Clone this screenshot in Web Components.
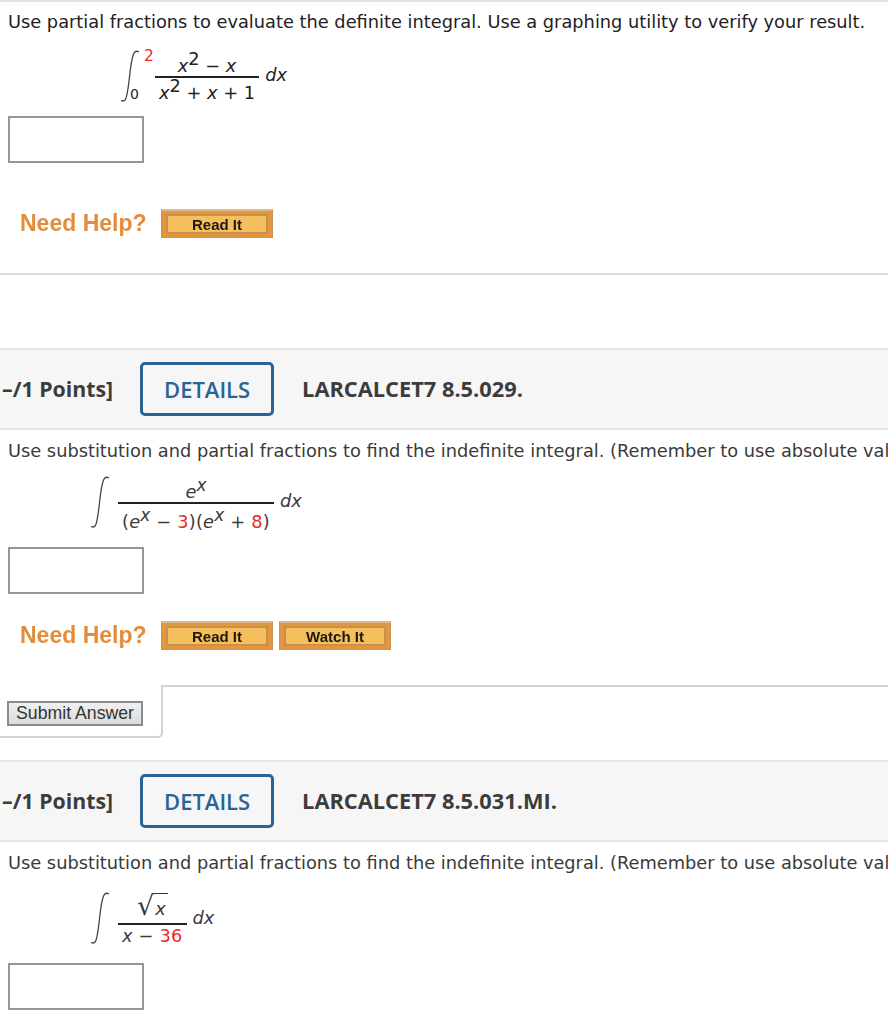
<!DOCTYPE html>
<html>
<head>
<meta charset="utf-8">
<style>
  html, body { margin: 0; padding: 0; background: #fff; }
  body { width: 888px; height: 1024px; overflow: hidden; font-family: "DejaVu Sans", sans-serif; }
  i { font-style: italic; }
  sup { font-size: 1em; line-height: 0; vertical-align: 7px; }
  b { font-weight: normal; color: #ee2a1f; }
  sup i { font-size: 0.95em; }
</style>
</head>
<body>
<q-body style="border-top: 2px solid #e3e3e3; padding-top: 10px;">
  <q-prompt style="color: #222;">Use partial fractions to evaluate the definite integral. Use a graphing utility to verify your result.</q-prompt>
  <math-row indent="120" style="margin-top: 18px; height: 52px; color: #222;">
    <math-int upper="2" lower="0"></math-int>
    <math-frac num-pad="0" den-pad="5" style="margin: 6px 0 0 -1px;">
      <span slot="num"><i>x</i><sup>2</sup> − <i>x</i></span>
      <span slot="den"><i>x</i><sup>2</sup> + <i>x</i> + 1</span>
    </math-frac>
  </math-row>
  <answer-box style="margin-top: 14px;"></answer-box>
  <help-row style="margin-top: 46px;">
    <help-button>Read It</help-button>
  </help-row>
</q-body>
<q-rule style="margin-top: 35px;"></q-rule>

<q-header points="–/1 Points]" code="LARCALCET7 8.5.029." style="margin-top: 73px;"></q-header>
<q-body style="padding-top: 11px;">
  <q-prompt>Use substitution and partial fractions to find the indefinite integral. (Remember to use absolute val</q-prompt>
  <math-row indent="90" style="margin-top: 15px; height: 52px;">
    <math-int></math-int>
    <math-frac num-pad="0" den-pad="8" style="margin: 6px 0 0 8px;">
      <span slot="num"><i>e</i><sup><i>x</i></sup></span>
      <span slot="den" style="letter-spacing: 0.2px;">(<i>e</i><sup><i>x</i></sup> − <b>3</b>)(<i>e</i><sup><i>x</i></sup> + <b>8</b>)</span>
    </math-frac>
  </math-row>
  <answer-box style="margin-top: 19px;"></answer-box>
  <help-row style="margin-top: 27px;">
    <help-button>Read It</help-button>
    <help-button>Watch It</help-button>
  </help-row>
</q-body>
<submit-bar style="margin-top: 35px;"></submit-bar>

<q-header points="–/1 Points]" code="LARCALCET7 8.5.031.MI." style="margin-top: 22px;"></q-header>
<q-body style="padding-top: 11px;">
  <q-prompt>Use substitution and partial fractions to find the indefinite integral. (Remember to use absolute val</q-prompt>
  <math-row indent="90" style="margin-top: 19px; height: 52px;">
    <math-int></math-int>
    <math-frac num-pad="4" den-pad="1" style="margin: 7px 0 0 8px;">
      <span slot="num"><math-sqrt><i>x</i></math-sqrt></span>
      <span slot="den" style="letter-spacing: 0.2px;"><i>x</i> − <b>36</b></span>
    </math-frac>
  </math-row>
  <answer-box style="margin-top: 19px;"></answer-box>
</q-body>

<script>
class QBody extends HTMLElement {
  constructor() {
    super();
    this.attachShadow({ mode: 'open' }).innerHTML = `
      <style>:host { display: block; }</style>
      <slot></slot>`;
  }
}

class QPrompt extends HTMLElement {
  constructor() {
    super();
    this.attachShadow({ mode: 'open' }).innerHTML = `
      <style>
        :host {
          display: block;
          padding-left: 8px;
          font: 17.8px/20px "DejaVu Sans", sans-serif;
          color: #3a3a3a;
          white-space: nowrap;
        }
      </style>
      <slot></slot>`;
  }
}

class MathRow extends HTMLElement {
  constructor() {
    super();
    const indent = this.getAttribute('indent') || 0;
    this.attachShadow({ mode: 'open' }).innerHTML = `
      <style>
        :host {
          display: flex;
          align-items: flex-start;
          padding-left: ${indent}px;
          font: 17.8px/20px "DejaVu Sans", sans-serif;
          color: #3a3a3a;
        }
      </style>
      <slot></slot>`;
  }
}

class MathInt extends HTMLElement {
  constructor() {
    super();
    const upper = this.getAttribute('upper') || '';
    const lower = this.getAttribute('lower') || '';
    this.attachShadow({ mode: 'open' }).innerHTML = `
      <style>
        :host { display: flex; align-items: stretch; height: 52px; }
        svg { display: block; width: 20px; height: 52px; flex: none; }
        .limits {
          display: flex;
          flex-direction: column;
          justify-content: space-between;
          line-height: 14px;
          width: 16px;
        }
        .up { color: #ee2a1f; margin: -1px 0 0 4px; font-size: 15.5px; }
        .lo { margin: 0 0 1px -10px; font-size: 14px; }
      </style>
      <svg viewBox="0 0 20 52">
        <path d="M1 50.5c2 1 3.6.4 4.600-1.400C7.400 45.500 8.600 35 9.600 26 10.800 15 12 5 14.600 2.300c1.300-1.300 3-1.200 4.200-.2" fill="none" stroke="#444" stroke-width="1.3"/>
      </svg>
      ${upper ? `<div class="limits"><span class="up">${upper}</span><span class="lo">${lower}</span></div>` : ''}`;
  }
}

class MathFrac extends HTMLElement {
  constructor() {
    super();
    const numPad = this.getAttribute('num-pad') || 0;
    const denPad = this.getAttribute('den-pad') || 0;
    this.attachShadow({ mode: 'open' }).innerHTML = `
      <style>
        :host { display: inline-flex; align-items: flex-start; }
        .frac { display: flex; flex-direction: column; align-items: stretch; text-align: center; white-space: nowrap; }
        .num { padding: 0 5px ${numPad}px; border-bottom: 2px solid #222; }
        .den { padding: ${denPad}px 4px 0; }
        .dx { margin: 9px 0 0 6px; font-style: italic; }
      </style>
      <div class="frac">
        <div class="num"><slot name="num"></slot></div>
        <div class="den"><slot name="den"></slot></div>
      </div>
      <span class="dx">dx</span>`;
  }
}

class MathSqrt extends HTMLElement {
  constructor() {
    super();
    this.attachShadow({ mode: 'open' }).innerHTML = `
      <style>
        :host { display: inline-block; white-space: nowrap; }
        .rad { font-size: 27px; line-height: 0; }
        .in { border-top: 1.5px solid #333; padding: 4px 2px 0 1px; }
      </style>
      <span class="rad">√</span><span class="in"><slot></slot></span>`;
  }
}

class AnswerBox extends HTMLElement {
  constructor() {
    super();
    this.attachShadow({ mode: 'open' }).innerHTML = `
      <style>
        :host {
          display: block;
          box-sizing: border-box;
          width: 136px;
          height: 47px;
          margin-left: 8px;
          background: #fff;
          border: 2px solid #969696;
        }
      </style>`;
  }
}

class HelpRow extends HTMLElement {
  constructor() {
    super();
    this.attachShadow({ mode: 'open' }).innerHTML = `
      <style>
        :host { display: flex; align-items: center; gap: 6px; padding-left: 20px; }
        .need {
          width: 135px;
          font: bold 23px/29px "Liberation Sans", sans-serif;
          color: #e38d3c;
          white-space: nowrap;
          filter: blur(0.3px);
        }
      </style>
      <span class="need">Need Help?</span>
      <slot></slot>`;
  }
}

class HelpButton extends HTMLElement {
  constructor() {
    super();
    this.attachShadow({ mode: 'open' }).innerHTML = `
      <style>
        :host {
          display: block;
          box-sizing: border-box;
          width: 112px;
          height: 29px;
          padding: 3px 4px 3px;
          background: #e4963f;
          border: 1px solid #c79457;
          border-top: 2px solid #e2b98a;
          filter: blur(0.4px);
        }
        .in {
          box-sizing: border-box;
          height: 100%;
          display: flex;
          align-items: center;
          justify-content: center;
          background: #f4bf5c;
          border: 2px solid #c6924d;
          font: bold 15px/1 "Liberation Sans", sans-serif;
          color: #1e1a10;
        }
      </style>
      <div class="in"><slot></slot></div>`;
  }
}

class QRule extends HTMLElement {
  constructor() {
    super();
    this.attachShadow({ mode: 'open' }).innerHTML = `
      <style>:host { display: block; height: 2px; background: #dcdcdc; }</style>`;
  }
}

class QHeader extends HTMLElement {
  constructor() {
    super();
    const points = this.getAttribute('points');
    const code = this.getAttribute('code');
    this.attachShadow({ mode: 'open' }).innerHTML = `
      <style>
        :host {
          display: flex;
          align-items: center;
          box-sizing: border-box;
          height: 82px;
          padding-left: 2px;
          background: #f6f6f6;
          border-top: 2px solid #e6e6e6;
          border-bottom: 2px solid #e6e6e6;
          font: bold 21.3px/1 "Open Sans", sans-serif;
          color: #3c3c3c;
          white-space: nowrap;
        }
        .details {
          box-sizing: border-box;
          width: 134px;
          height: 54px;
          margin: 0 28px 0 27px;
          padding-bottom: 1px;
          display: flex;
          align-items: center;
          justify-content: center;
          border: 3px solid #2a6496;
          border-radius: 5px;
          font-size: 22px;
          font-weight: 600;
          color: #2a6496;
        }
        .code { font-size: 21.8px; }
      </style>
      <span class="pts">${points}</span>
      <div class="details">DETAILS</div>
      <span class="code">${code}</span>`;
  }
}

class SubmitBar extends HTMLElement {
  constructor() {
    super();
    this.attachShadow({ mode: 'open' }).innerHTML = `
      <style>
        :host { display: flex; align-items: flex-start; }
        .left {
          box-sizing: border-box;
          width: 163px;
          height: 53px;
          padding: 16px 0 0 7px;
          border-right: 2px solid #d2d2d2;
          border-bottom: 2px solid #d2d2d2;
          border-bottom-right-radius: 5px;
        }
        .right { flex: 1; height: 0; border-top: 2px solid #d2d2d2; margin-left: -2px; }
        .btn {
          box-sizing: border-box;
          width: 136px;
          height: 25px;
          display: flex;
          align-items: center;
          justify-content: center;
          background: linear-gradient(#f0f0f0, #dcdcdc);
          border: 2px solid #8c8c8c;
          font: 17.7px/1 "Liberation Sans", sans-serif;
          color: #333;
        }
      </style>
      <div class="left"><div class="btn">Submit Answer</div></div>
      <div class="right"></div>`;
  }
}

customElements.define('q-body', QBody);
customElements.define('q-prompt', QPrompt);
customElements.define('math-row', MathRow);
customElements.define('math-int', MathInt);
customElements.define('math-frac', MathFrac);
customElements.define('math-sqrt', MathSqrt);
customElements.define('answer-box', AnswerBox);
customElements.define('help-row', HelpRow);
customElements.define('help-button', HelpButton);
customElements.define('q-rule', QRule);
customElements.define('q-header', QHeader);
customElements.define('submit-bar', SubmitBar);
</script>
</body>
</html>
